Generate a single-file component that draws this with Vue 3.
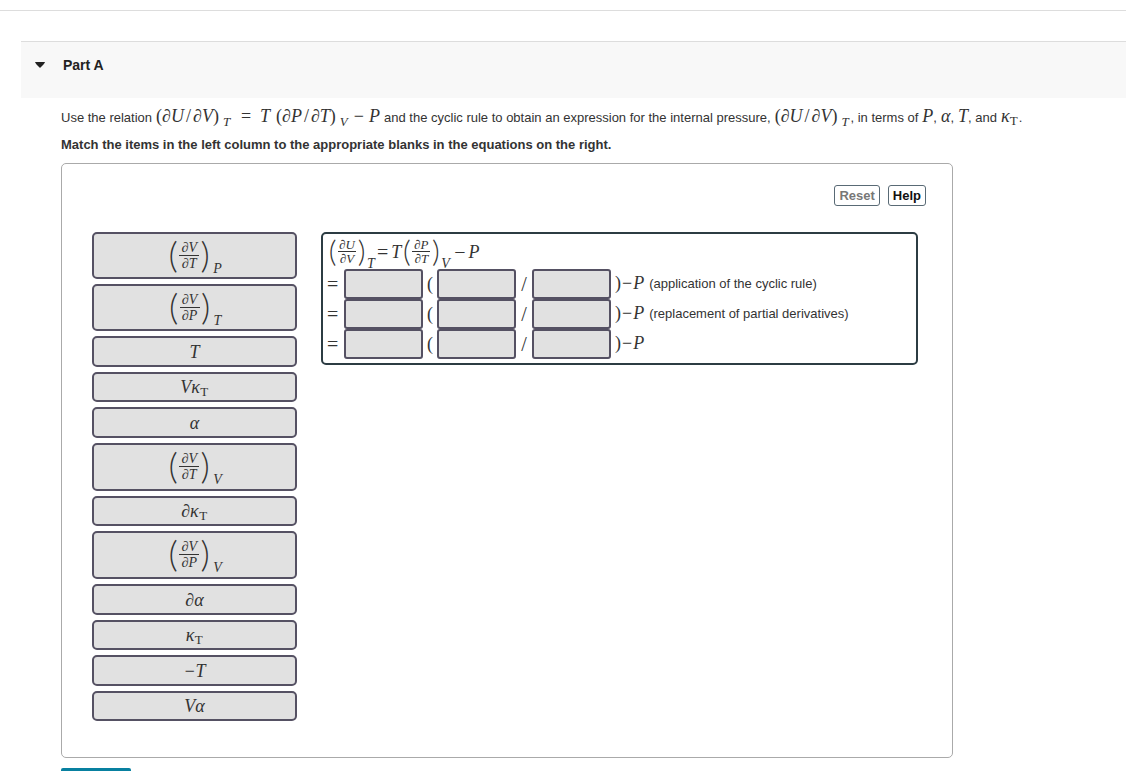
<script setup>
const cards = [
  { size: 'tall', num: 'V', den: 'T', at: 'P' },
  { size: 'tall', num: 'V', den: 'P', at: 'T' },
  { size: 'line', text: 'T' },
  { size: 'short', text: 'Vκ', sub: 'T' },
  { size: 'line', text: 'α' },
  { size: 'taller', num: 'V', den: 'T', at: 'V' },
  { size: 'short', text: '∂κ', sub: 'T' },
  { size: 'taller', num: 'V', den: 'P', at: 'V' },
  { size: 'line', text: '∂α' },
  { size: 'short', text: 'κ', sub: 'T' },
  { size: 'line', text: '−T' },
  { size: 'short', text: 'Vα' }
]

const rows = [
  { id: 1, note: '(application of the cyclic rule)' },
  { id: 2, note: '(replacement of partial derivatives)' },
  { id: 3, note: '' }
]
</script>

<template>
  <div class="page">
    <div class="top-rule"></div>
    <main class="content">
      <header class="part-head">
        <button class="toggle" type="button" aria-expanded="true" aria-label="Collapse Part A">
          <svg width="10" height="6" viewBox="0 0 10 6"><path d="M0 0H10Q9.500 1.500 5.500 5.600Q5 6 4.500 5.600Q.5 1.500 0 0Z" fill="#222" /></svg>
        </button>
        <h2>Part A</h2>
      </header>

      <section class="body">
        <p class="statement">
          <span>Use the relation</span>
          <span class="math"><i class="deriv"><b>(</b>∂U<b class="over">/</b>∂V<b>)</b></i><sub>T</sub><b class="equals">=</b><i>T</i><i class="deriv second"><b>(</b>∂P<b class="over">/</b>∂T<b>)</b></i><sub>V</sub><b class="minus">−</b><i>P</i></span>
          <span>and the cyclic rule to obtain an expression for the internal pressure,</span>
          <span class="math"><i class="deriv"><b>(</b>∂U<b class="over">/</b>∂V<b>)</b></i><sub>T</sub></span><span class="tight">, in terms of</span>
          <span class="math"><i>P</i></span><span class="tight">,</span>
          <span class="math"><i>α</i></span><span class="tight">,</span>
          <span class="math"><i>T</i></span><span class="tight">, and</span>
          <span class="math"><i>κ</i><sub class="upright">T</sub></span><span class="tight">.</span>
        </p>
        <p class="instruction">Match the items in the left column to the appropriate blanks in the equations on the right.</p>

        <div class="panel">
          <div class="tools">
            <button class="tool reset" type="button">Reset</button>
            <button class="tool" type="button">Help</button>
          </div>
          <div class="columns">
            <div class="cards">
              <button v-for="(c, i) in cards" :key="i" type="button" class="card" :class="c.size">
                <span v-if="c.num" class="partial">
                  <span class="paren">(</span>
                  <span class="frac"><span class="num">∂{{ c.num }}</span><span>∂{{ c.den }}</span></span>
                  <span class="paren">)</span>
                  <span class="at">{{ c.at }}</span>
                </span>
                <span v-else class="symbol">{{ c.text }}<sub v-if="c.sub" class="upright">{{ c.sub }}</sub></span>
              </button>
            </div>

            <div class="equations">
              <div class="given">
                <span class="partial small">
                  <span class="paren">(</span>
                  <span class="frac"><span class="num">∂U</span><span>∂V</span></span>
                  <span class="paren">)</span>
                  <span class="at">T</span>
                </span>
                <span class="op">=</span>
                <span class="var">T</span>
                <span class="partial small">
                  <span class="paren">(</span>
                  <span class="frac"><span class="num">∂P</span><span>∂T</span></span>
                  <span class="paren">)</span>
                  <span class="at">V</span>
                </span>
                <span class="op spaced">−</span>
                <span class="var">P</span>
              </div>
              <div v-for="r in rows" :key="r.id" class="row">
                <span class="op lead">=</span>
                <button class="blank" type="button" :aria-label="`Row ${r.id}, first blank`"></button>
                <span class="sep">(</span>
                <button class="blank" type="button" :aria-label="`Row ${r.id}, second blank`"></button>
                <span class="sep slash">/</span>
                <button class="blank" type="button" :aria-label="`Row ${r.id}, third blank`"></button>
                <span class="tail">)<span class="dash">−</span><i>P</i></span>
                <span v-if="r.note" class="note">{{ r.note }}</span>
              </div>
            </div>
          </div>
        </div>
        <button class="submit" type="button" aria-label="Submit"></button>
      </section>
    </main>
  </div>
</template>

<style>
body {
  margin: 0;
  background: #fff;
}
</style>

<style scoped>
* {
  box-sizing: border-box;
}
.page {
  height: 100vh;
  overflow: hidden;
  padding-top: 10px;
  font: 13px/20px "Liberation Sans", Arial, sans-serif;
  color: #333;
}
button {
  font: inherit;
  color: inherit;
  margin: 0;
  padding: 0;
}
.top-rule {
  border-top: 1px solid #ddd;
}
.content {
  margin: 30px 0 0 21px;
}
.part-head {
  display: flex;
  height: 57px;
  padding: 13px 14px 0;
  border-top: 1px solid #ddd;
  background: #f8f8f8;
}
.toggle {
  display: flex;
  align-items: center;
  width: 28px;
  height: 20px;
  border: 0;
  background: none;
}
h2 {
  margin: 0;
  font-size: 14px;
  line-height: 20px;
  color: #222;
}
.body {
  padding: 6px 20px 0 40px;
}
p {
  margin: 0;
}
.statement {
  display: flex;
  align-items: baseline;
  gap: 4px;
  height: 31px;
  line-height: 24px;
  white-space: nowrap;
}
.tight {
  margin-left: -4px;
}
.math,
.symbol,
.partial,
.op,
.var,
.sep,
.tail {
  font-family: "Liberation Serif", "Times New Roman", serif;
}
.math {
  font-size: 18px;
}
.math b {
  font-weight: 400;
  font-style: normal;
}
.math .over {
  margin: 0 2px;
}
sub {
  display: inline-block;
  min-width: 9px;
  margin-left: 4px;
  font-size: 13px;
  font-style: italic;
  line-height: 0;
  vertical-align: -4px;
}
sub.upright {
  margin-left: 0;
  font-style: normal;
  vertical-align: -3px;
}
.math .equals {
  margin: 0 9px;
}
.second {
  margin-left: 6px;
}
.math .minus {
  margin: 0 5px;
}
.instruction {
  font-weight: 700;
  line-height: 20px;
}
.panel {
  max-width: 892px;
  margin-top: 8px;
  padding: 21px 26px 36px 30px;
  border: 1px solid #aaa;
  border-radius: 5px;
}
.tools {
  display: flex;
  justify-content: flex-end;
  gap: 8px;
}
.tool {
  height: 21px;
  padding: 0 4px;
  border: 1px solid #596a75;
  border-radius: 3px;
  background: #fff;
  font-weight: 700;
  line-height: 19px;
  color: #111;
}
.reset {
  color: #777;
}
.columns {
  display: flex;
  align-items: flex-start;
  gap: 24px;
  margin-top: 26px;
  padding-right: 8px;
}
.cards {
  display: flex;
  flex: none;
  flex-direction: column;
  gap: 5px;
  width: 205px;
}
.card {
  display: flex;
  align-items: center;
  justify-content: center;
  border: 2px solid #555163;
  border-radius: 5px;
  background: #e1e1e1;
}
.short {
  height: 30px;
}
.line {
  height: 31px;
}
.tall {
  height: 47px;
}
.taller {
  height: 48px;
}
.symbol {
  font-size: 18px;
  font-style: italic;
  line-height: 20px;
}
.partial {
  display: flex;
  align-items: center;
  height: 40px;
  font-style: italic;
}
.paren {
  width: 12px;
  height: 40px;
  font-family: Lato, "Liberation Serif", serif;
  font-size: 36px;
  font-style: normal;
  font-weight: 300;
  line-height: 36px;
  text-align: center;
}
.frac {
  display: flex;
  flex-direction: column;
  min-width: 20px;
  font-size: 14px;
  line-height: 16px;
  text-align: center;
}
.num {
  border-bottom: 1px solid #333;
  line-height: 15px;
}
.at {
  align-self: flex-end;
  margin-left: 2px;
  font-size: 14px;
  line-height: 14px;
}
.small,
.small .paren {
  height: 35px;
}
.small .paren {
  width: 11px;
  font-size: 30px;
  line-height: 32px;
}
.small .frac {
  min-width: 18px;
  font-size: 13px;
  line-height: 14px;
}
.small .num {
  line-height: 13px;
}
.small .at {
  min-width: 10px;
  margin-left: 0;
  line-height: 11px;
}
.equations {
  flex: 1;
  min-width: 0;
  padding: 0 4px 4px;
  border: 2px solid #2c3c43;
  border-radius: 5px;
}
.given {
  display: flex;
  align-items: center;
  height: 35px;
}
.var {
  margin-left: 3px;
  font-size: 18px;
  font-style: italic;
}
.op {
  font-size: 20px;
}
.spaced {
  margin-left: 3px;
}
.row {
  display: flex;
  align-items: center;
  height: 30px;
}
.lead {
  width: 17px;
}
.blank {
  flex: none;
  width: 79px;
  height: 30px;
  border: 2px solid #555163;
  border-radius: 3px;
  background: #e1e1e1;
}
.sep {
  width: 14px;
  font-size: 18px;
  text-align: center;
}
.slash {
  width: 16px;
  font-size: 20px;
}
.tail {
  margin-left: 4px;
  padding-bottom: 2px;
  font-size: 18px;
  white-space: nowrap;
}
.dash {
  margin: 0 1px;
}
.note {
  margin-left: 5px;
  white-space: nowrap;
}
.submit {
  display: block;
  width: 70px;
  height: 32px;
  margin-top: 10px;
  border: 0;
  border-radius: 2px;
  background: #0880a0;
}
</style>
